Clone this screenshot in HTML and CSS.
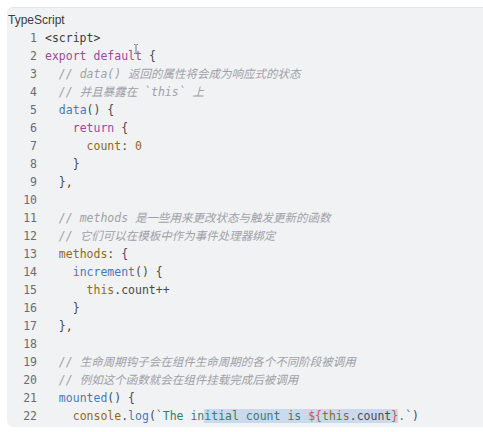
FILE: index.html
```html
<!DOCTYPE html>
<html>
<head>
<meta charset="utf-8">
<link rel="stylesheet" href="styles.css">
</head>
<body>
<div class="panel">
  <div class="lang">TypeScript</div>
  <div class="code">
    <div class="ln"><span class="num">1</span><span class="src"><span class="tag">&lt;script&gt;</span></span></div>
    <div class="ln"><span class="num">2</span><span class="src"><span class="kw">export default</span> <span class="p">{</span></span></div>
    <div class="ln"><span class="num">3</span><span class="src">  <span class="cm">// data() 返回的属性将会成为响应式的状态</span></span></div>
    <div class="ln"><span class="num">4</span><span class="src">  <span class="cm">// 并且暴露在 `this` 上</span></span></div>
    <div class="ln"><span class="num">5</span><span class="src">  <span class="fn">data</span><span class="p">() {</span></span></div>
    <div class="ln"><span class="num">6</span><span class="src">    <span class="kw">return</span> <span class="p">{</span></span></div>
    <div class="ln"><span class="num">7</span><span class="src">      <span class="pr">count</span><span class="p">:</span> <span class="pr">0</span></span></div>
    <div class="ln"><span class="num">8</span><span class="src">    <span class="p">}</span></span></div>
    <div class="ln"><span class="num">9</span><span class="src">  <span class="p">},</span></span></div>
    <div class="ln"><span class="num">10</span><span class="src"></span></div>
    <div class="ln"><span class="num">11</span><span class="src">  <span class="cm">// methods 是一些用来更改状态与触发更新的函数</span></span></div>
    <div class="ln"><span class="num">12</span><span class="src">  <span class="cm">// 它们可以在模板中作为事件处理器绑定</span></span></div>
    <div class="ln"><span class="num">13</span><span class="src">  <span class="pr">methods</span><span class="p">: {</span></span></div>
    <div class="ln"><span class="num">14</span><span class="src">    <span class="fn">increment</span><span class="p">() {</span></span></div>
    <div class="ln"><span class="num">15</span><span class="src">      <span class="pr">this</span><span class="p">.count++</span></span></div>
    <div class="ln"><span class="num">16</span><span class="src">    <span class="p">}</span></span></div>
    <div class="ln"><span class="num">17</span><span class="src">  <span class="p">},</span></span></div>
    <div class="ln"><span class="num">18</span><span class="src"></span></div>
    <div class="ln"><span class="num">19</span><span class="src">  <span class="cm">// 生命周期钩子会在组件生命周期的各个不同阶段被调用</span></span></div>
    <div class="ln"><span class="num">20</span><span class="src">  <span class="cm">// 例如这个函数就会在组件挂载完成后被调用</span></span></div>
    <div class="ln"><span class="num">21</span><span class="src">  <span class="fn">mounted</span><span class="p">() {</span></span></div>
    <div class="ln"><span class="num">22</span><span class="src">    <span class="pr">console</span><span class="p">.</span><span class="fn">log</span><span class="p">(</span><span class="st">`The in</span><span class="sel"><span class="st">itial count is </span><span class="ip">${</span><span class="pr">this</span><span class="p">.count</span><span class="ip">}</span></span><span class="st">.`</span><span class="p">)</span></span></div>
  </div>
  <svg class="cursor" width="6" height="10" viewBox="0 0 6 10"><path d="M1 0.5h1.5M3.5 0.5H5M3 1v8M1 9.5h1.5M3.5 9.5H5" stroke="#7a7a7a" stroke-width="1" fill="none"/></svg>
</div>
</body>
</html>
```

FILE: styles.css
```css
html, body {
  margin: 0;
  padding: 0;
  background: #ffffff;
}
.panel {
  position: relative;
  margin: 7px 0 0 7px;
  height: 420px;
  padding: 4px 0 0 1px;
  box-sizing: border-box;
  background: #f1f2f4;
  border-top: 1px solid #e3e5e9;
  border-radius: 6px 0 0 6px;
}
.lang {
  font-family: "Liberation Sans", Arial, sans-serif;
  font-size: 12px;
  line-height: 16px;
  color: #3c3c43;
  height: 16px;
}
.code {
  margin-top: 1px;
  font-family: "DejaVu Sans Mono", "Noto Sans CJK SC", monospace;
  font-size: 11.5px;
  line-height: 18px;
  color: #4a4a4f;
}
.ln {
  display: flex;
  height: 18px;
}
.num {
  width: 29px;
  text-align: right;
  color: #6b6b70;
  flex: none;
}
.src {
  padding-left: 8px;
  white-space: pre;
}
.tag { color: #3b3b3f; }
.kw { color: #9a4b93; }
.fn { color: #4a78b8; }
.pr { color: #8b6b25; }
.p { color: #4a4a4f; }
.cm {
  color: #a0a1a7;
  font-style: italic;
}
.st { color: #3d7a6c; }
.ip { color: #c2574c; }
.sel {
  background: #cbd9ef;
}
.cursor {
  position: absolute;
  left: 126px;
  top: 36px;
}
```
